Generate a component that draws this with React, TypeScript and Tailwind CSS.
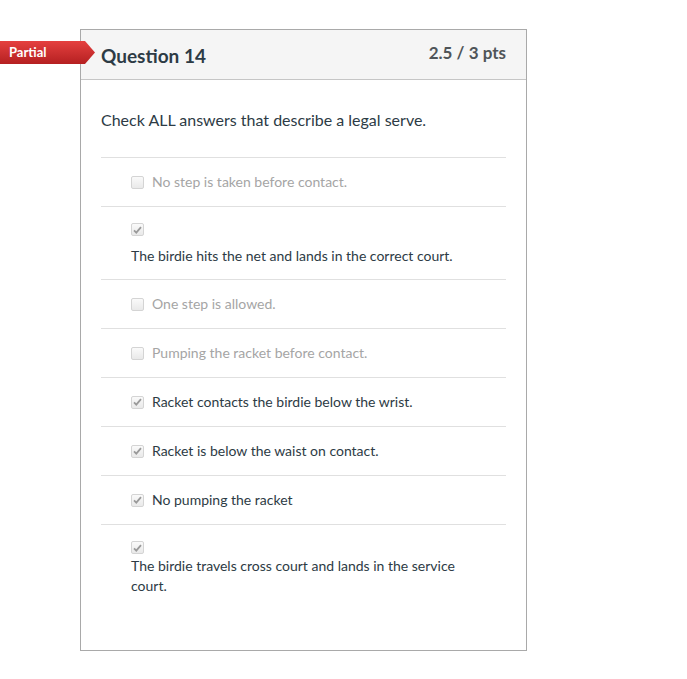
type Answer = {
  text: string;
  checked: boolean;
  stacked?: boolean;
};

const answers: Answer[] = [
  { text: "No step is taken before contact.", checked: false },
  { text: "The birdie hits the net and lands in the correct court.", checked: true, stacked: true },
  { text: "One step is allowed.", checked: false },
  { text: "Pumping the racket before contact.", checked: false },
  { text: "Racket contacts the birdie below the wrist.", checked: true },
  { text: "Racket is below the waist on contact.", checked: true },
  { text: "No pumping the racket", checked: true },
  { text: "The birdie travels cross court and lands in the service court.", checked: true, stacked: true },
];

function Box({ checked }: { checked: boolean }) {
  return (
    <span className="inline-flex h-[13px] w-[13px] shrink-0 items-center justify-center rounded-[2px] border border-[#d4d4d4] bg-gradient-to-b from-[#fafafa] to-[#e9e9e9]">
      {checked && (
        <svg width="9" height="8" viewBox="0 0 9 8">
          <path d="M1 4.3 L3.3 6.6 L8 1.2" fill="none" stroke="#9a9a9a" strokeWidth="1.8" />
        </svg>
      )}
    </span>
  );
}

function AnswerRow({ a, last }: { a: Answer; last: boolean }) {
  const color = a.checked ? "text-[#2d3b45]" : "text-[#a5a5a5]";
  if (a.stacked) {
    return (
      <div className={`pl-[30px] ${last ? "pt-[16px]" : "border-b border-[#e0e0e0] pt-[16px] pb-[13px]"}`}>
        <div className={`flex ${last ? "h-[15px]" : "h-[23px]"}`}>
          <Box checked={a.checked} />
        </div>
        <p className={`w-[330px] text-[14px] leading-[20px] ${color}`}>{a.text}</p>
      </div>
    );
  }
  return (
    <div className="flex items-center gap-[8px] border-b border-[#e0e0e0] py-[14px] pl-[30px]">
      <Box checked={a.checked} />
      <span className={`text-[14px] leading-[20px] ${color}`}>{a.text}</span>
    </div>
  );
}

export default function App() {
  return (
    <div className="relative min-h-[679px] bg-white pl-[80px] pt-[29px] font-['Lato','Liberation_Sans',sans-serif]">
      {/* grade badge sits over the card edge */}
      <div className="absolute left-0 top-[41px] flex h-[23px] w-[95px] items-center bg-gradient-to-b from-[#e5403f] to-[#b51f21] pl-[9px] text-[13px] font-bold text-white shadow-[0_1px_2px_rgba(0,0,0,0.3)] [clip-path:polygon(0_0,85px_0,100%_50%,85px_100%,0_100%)]">
        Partial
      </div>

      <div className="w-[447px] border border-[#a9a9a9]">
        <div className="flex h-[50px] items-center justify-between border-b border-[#c6c6c6] bg-[#f5f5f5] pl-[20px] pr-[20px]">
          <h2 className="pt-[3px] text-[19px] font-bold text-[#2d3b45]">Question 14</h2>
          <span className="pb-[4px] text-[17px] font-bold text-[#4f5458]">2.5 / 3 pts</span>
        </div>

        <div className="px-[20px] pb-[54px] pt-[29px]">
          <p className="pb-[26px] text-[16px] leading-[22px] text-[#2d3b45]">
            Check ALL answers that describe a legal serve.
          </p>
          <div className="border-t border-[#e0e0e0]">
            {answers.map((a, i) => (
              <AnswerRow key={i} a={a} last={i === answers.length - 1} />
            ))}
          </div>
        </div>
      </div>
    </div>
  );
}
